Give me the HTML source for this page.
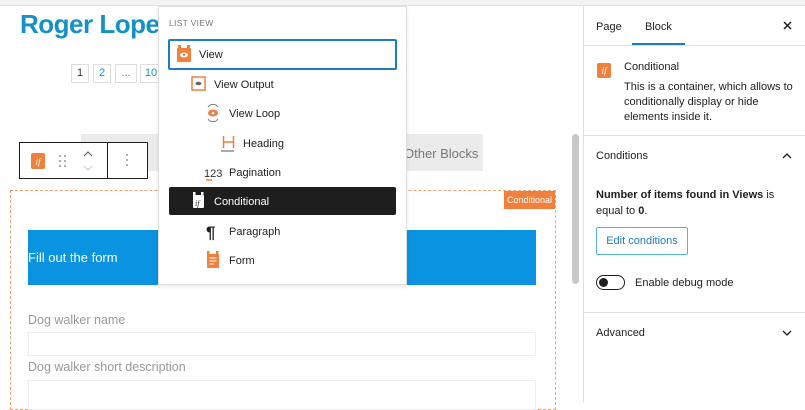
<!DOCTYPE html><html><head><style>
*{box-sizing:border-box;margin:0;padding:0}
body{width:805px;height:403px;overflow:hidden;background:#fff;font-family:"Liberation Sans",sans-serif;position:relative;color:#1e1e1e}
.a{position:absolute}
.pg{position:absolute;top:64px;height:19px;border:1px solid #ddd;font-size:11px;text-align:center;line-height:17px;color:#1a8fc4}
.row{position:absolute;font-size:11px;line-height:14px}
.sb{font-size:11px;position:absolute}
</style></head><body>
<div class="a" style="left:0;top:0;width:805px;height:6px;background:#f3f3f3;border-bottom:1px solid #e2e2e2"></div>
<div class="a" style="left:20px;top:9px;font-size:26px;font-weight:bold;color:#1591c7;letter-spacing:-0.5px">Roger Lopez</div>
<div class="pg" style="left:71px;width:18px;color:#333">1</div>
<div class="pg" style="left:93px;width:18px">2</div>
<div class="pg" style="left:115px;width:22px">...</div>
<div class="pg" style="left:140px;width:22px">10</div>
<div class="a" style="left:81px;top:134px;width:402px;height:37px;background:#ebebeb"></div>
<div class="a" style="left:404px;top:146px;font-size:13px;color:#777">Other Blocks</div>
<div class="a" style="left:19px;top:142px;width:129px;height:37px;border:1px solid #1e1e1e;background:#fff"></div>
<div class="a" style="left:107px;top:142px;width:1px;height:37px;background:#1e1e1e"></div>
<div class="a" style="left:31px;top:153px;width:14px;height:16px;background:#f0803c;border-radius:2px;color:#fff;font-size:9px;font-style:italic;text-align:center;line-height:18px;font-family:'Liberation Serif',serif">if</div>
<svg class="a" style="left:0;top:0" width="805" height="403">
<g fill="#777"><circle cx="60" cy="156" r="0.9"/><circle cx="65" cy="156" r="0.9"/><circle cx="60" cy="161" r="0.9"/><circle cx="65" cy="161" r="0.9"/><circle cx="60" cy="166" r="0.9"/><circle cx="65" cy="166" r="0.9"/>
<circle cx="127" cy="155" r="0.9"/><circle cx="127" cy="160" r="0.9"/><circle cx="127" cy="165" r="0.9"/></g>
<path d="M84 156l4-4 4 4" stroke="#555" fill="none"/><path d="M84 166l4 4 4-4" stroke="#ccc" fill="none"/>
<path d="M783 158l4-4 4 4" stroke="#1e1e1e" stroke-width="1.3" fill="none"/>
<path d="M783 331l4 4 4-4" stroke="#1e1e1e" stroke-width="1.3" fill="none"/>
<path d="M784 22l7 7M791 22l-7 7" stroke="#1e1e1e" stroke-width="1.5"/>
</svg>
<div class="a" style="left:10px;top:190px;width:546px;height:220px;border:1px dashed #f0a070"></div>
<div class="a" style="left:504px;top:191px;width:51px;height:18px;background:#f0803c;color:#fff;font-size:9px;line-height:18px;text-align:center">Conditional</div>
<div class="a" style="left:28px;top:230px;width:508px;height:55px;background:#0a93e0"></div>
<div class="a" style="left:28px;top:250px;color:#fff;font-size:13px">Fill out the form</div>
<div class="a" style="left:28px;top:313px;color:#999;font-size:12.5px">Dog walker name</div>
<div class="a" style="left:28px;top:332px;width:508px;height:24px;border:1px solid #eee"></div>
<div class="a" style="left:28px;top:360px;color:#999;font-size:12.5px">Dog walker short description</div>
<div class="a" style="left:28px;top:380px;width:508px;height:30px;border:1px solid #eee"></div>
<div class="a" style="left:572px;top:134px;width:7px;height:150px;background:#c8c8c8;border-radius:4px"></div>
<div class="a" style="left:583px;top:6px;width:1px;height:397px;background:#e0e0e0"></div>
<div class="a" style="left:158px;top:6px;width:249px;height:279px;background:#fff;border:1px solid #ddd;box-shadow:0 2px 4px rgba(0,0,0,.08)"></div>
<div class="a" style="left:169px;top:18px;font-size:8.5px;color:#757575;letter-spacing:.3px">LIST VIEW</div>
<div class="a" style="left:168px;top:39px;width:229px;height:31px;border:2px solid #1c7cc4;border-radius:2px"></div>
<div class="a" style="left:169px;top:187px;width:227px;height:28px;background:#1e1e1e;border-radius:2px"></div>
<svg class="a" style="left:0;top:0" width="420" height="290">
<g fill="#f0803c"><rect x="177" y="48" width="14" height="14" rx="1"/><rect x="178" y="45" width="3" height="4"/><rect x="187" y="45" width="3" height="4"/></g>
<ellipse cx="184" cy="55" rx="4" ry="2.5" fill="#fff"/><circle cx="184" cy="55" r="1.2" fill="#f0803c"/>
<rect x="192" y="77" width="13" height="13" fill="#fff" stroke="#f0803c" stroke-width="1.5"/><ellipse cx="198.5" cy="83.5" rx="3" ry="1.8" fill="#666"/>
<ellipse cx="213" cy="113" rx="5" ry="3.5" fill="#f0803c"/><circle cx="213" cy="113" r="1.3" fill="#fff"/>
<path d="M208 107a6 6 0 0 1 10 0M208 119a6 6 0 0 0 10 0" stroke="#777" fill="none"/>
<path d="M223.5 136v12M233.5 136v12M223.5 142h10" stroke="#f0803c" stroke-width="1.5"/><line x1="221" y1="151" x2="234" y2="151" stroke="#555"/>
<text x="204" y="177" font-size="11" fill="#333" font-family="Liberation Sans">123</text><line x1="206" y1="180" x2="212" y2="180" stroke="#f0803c" stroke-width="1.5"/>
<g fill="#fff"><rect x="193" y="195" width="11" height="13" rx="1"/><rect x="193" y="192" width="2.5" height="4"/><rect x="201" y="192" width="2.5" height="4"/></g>
<text x="195" y="206" font-size="8" font-style="italic" fill="#1e1e1e" font-family="Liberation Serif">if</text>
<text x="206" y="238" font-size="17" font-weight="bold" fill="#1e1e1e" font-family="Liberation Sans">¶</text>
<g fill="#f0803c"><rect x="207" y="254" width="12" height="14" rx="1"/><rect x="207" y="251" width="2.5" height="4"/><rect x="216" y="251" width="2.5" height="4"/></g>
<g stroke="#fff"><line x1="209.5" y1="258" x2="216.5" y2="258"/><line x1="209.5" y1="261" x2="216.5" y2="261"/><line x1="209.5" y1="264" x2="214" y2="264"/></g>
</svg>
<div class="row" style="left:199px;top:48px">View</div>
<div class="row" style="left:214px;top:78px">View Output</div>
<div class="row" style="left:229px;top:107px">View Loop</div>
<div class="row" style="left:243px;top:137px">Heading</div>
<div class="row" style="left:229px;top:166px">Pagination</div>
<div class="row" style="left:214px;top:195px;color:#fff">Conditional</div>
<div class="row" style="left:229px;top:225px">Paragraph</div>
<div class="row" style="left:229px;top:254px">Form</div>
<div class="sb" style="left:596px;top:21px">Page</div>
<div class="sb" style="left:645px;top:21px">Block</div>
<div class="a" style="left:632px;top:43px;width:53px;height:2px;background:#1c7cc4"></div>
<div class="a" style="left:584px;top:45px;width:221px;height:1px;background:#e0e0e0"></div>
<div class="a" style="left:597px;top:63px;width:14px;height:15px;background:#f0803c;border-radius:2px;color:#fff;font-size:9px;font-style:italic;text-align:center;line-height:16px;font-family:'Liberation Serif',serif">if</div>
<div class="sb" style="left:624px;top:61px">Conditional</div>
<div class="sb" style="left:624px;top:80px;line-height:15px;width:180px">This is a container, which allows to conditionally display or hide elements inside it.</div>
<div class="a" style="left:584px;top:135px;width:221px;height:1px;background:#e0e0e0"></div>
<div class="sb" style="left:596px;top:150px">Conditions</div>
<div class="sb" style="left:596px;top:187px;line-height:16px;width:200px"><b>Number of items found in Views</b> is equal to <b>0</b>.</div>
<div class="a" style="left:596px;top:227px;width:92px;height:28px;border:1px solid #5ab0dc;border-radius:2px;font-size:11px;color:#1c7cc4;text-align:center;line-height:26px">Edit conditions</div>
<div class="a" style="left:596px;top:275px;width:29px;height:15px;border:1px solid #1e1e1e;border-radius:8px"></div>
<div class="a" style="left:599px;top:278px;width:9px;height:9px;background:#1e1e1e;border-radius:50%"></div>
<div class="sb" style="left:635px;top:277px">Enable debug mode</div>
<div class="a" style="left:584px;top:312px;width:221px;height:1px;background:#e0e0e0"></div>
<div class="sb" style="left:596px;top:327px">Advanced</div>
</body></html>
